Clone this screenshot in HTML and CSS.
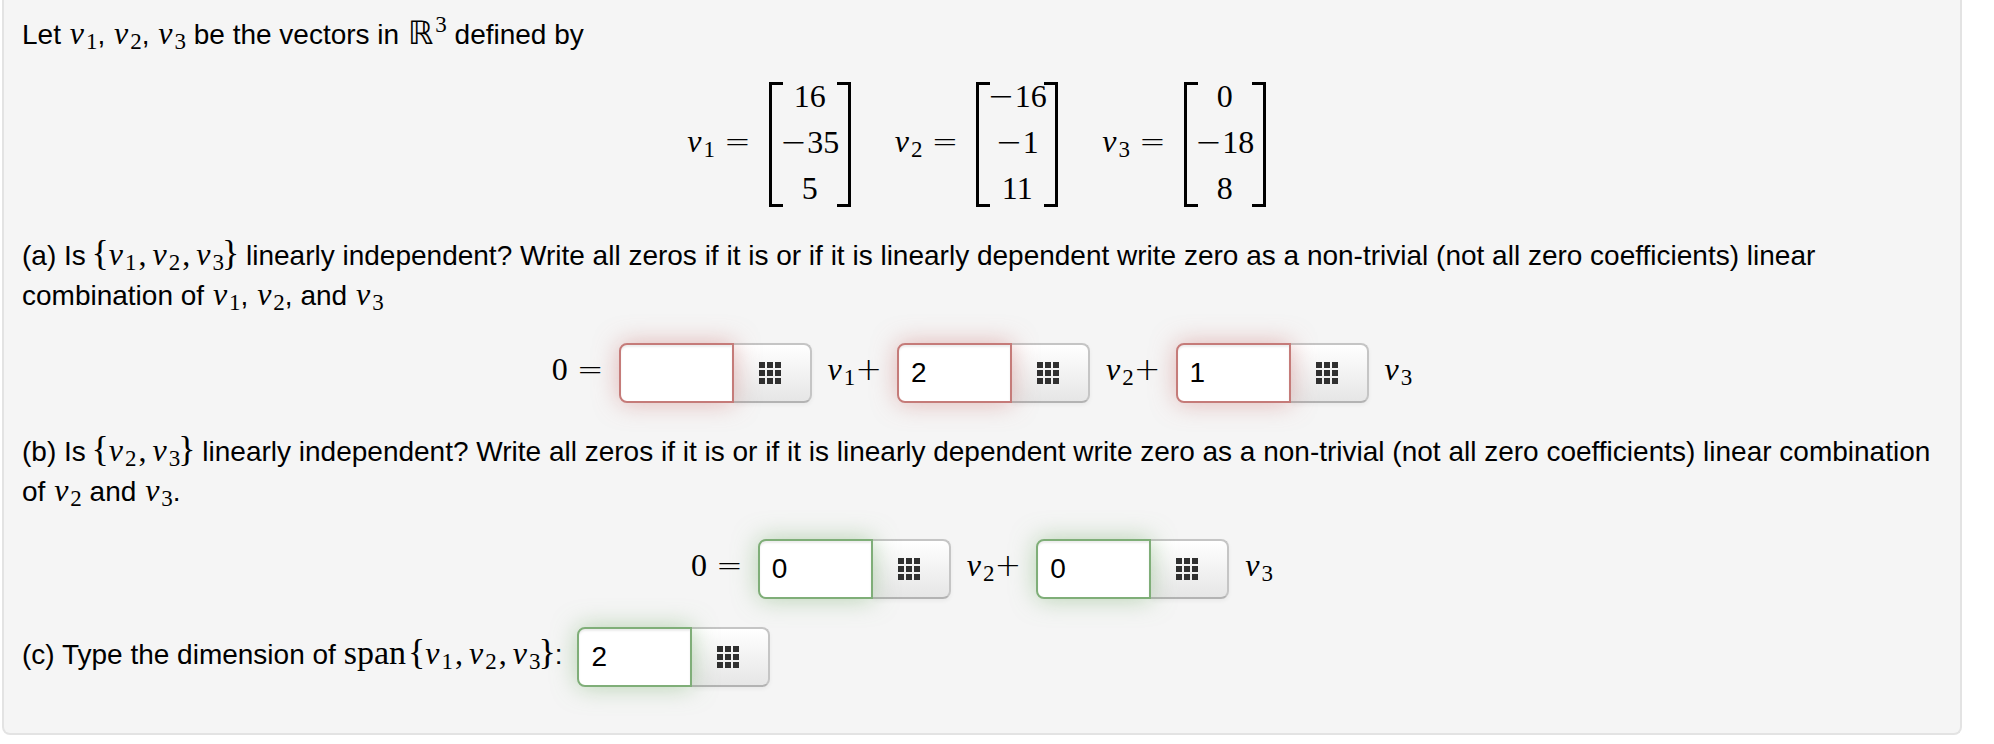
FILE: index.html
```html
<!DOCTYPE html>
<html lang="en">
<head>
    <meta charset="UTF-8" />
    <meta name="viewport" content="width=device-width, initial-scale=1.0"/>
    <title>Linear Independence</title>
    <link rel="stylesheet" href="styles.css">
</head>
<body>
    <svg class="sprite" aria-hidden="true">
        <symbol id="grid" viewBox="0 0 22 22">
            <path d="M0 0h6v6h-6zM8 0h6v6h-6zM16 0h6v6h-6zM0 8h6v6h-6zM8 8h6v6h-6zM16 8h6v6h-6zM0 16h6v6h-6zM8 16h6v6h-6zM16 16h6v6h-6z"/>
        </symbol>
    </svg>
    <main class="problem">
        <p>Let <span class="math"><i>v</i><sub>1</sub></span>, <span class="math"><i>v</i><sub>2</sub></span>, <span class="math"><i>v</i><sub>3</sub></span> be the vectors in <span class="math"><span class="real">ℝ</span><sup>3</sup></span> defined by</p>

        <div class="vectors">
            <div class="vector">
                <span class="term"><span class="math"><i>v</i><sub>1</sub><span class="op rel">=</span></span></span>
                <div class="matrix">
                    <span>16</span>
                    <span><span class="op">−</span>35</span>
                    <span>5</span>
                </div>
            </div>
            <div class="vector">
                <span class="term"><span class="math"><i>v</i><sub>2</sub><span class="op rel">=</span></span></span>
                <div class="matrix">
                    <span><span class="op">−</span>16</span>
                    <span><span class="op">−</span>1</span>
                    <span>11</span>
                </div>
            </div>
            <div class="vector">
                <span class="term"><span class="math"><i>v</i><sub>3</sub><span class="op rel">=</span></span></span>
                <div class="matrix">
                    <span>0</span>
                    <span><span class="op">−</span>18</span>
                    <span>8</span>
                </div>
            </div>
        </div>

        <p>(a) Is <span class="math"><span class="brace">{</span><i>v</i><sub>1</sub><span class="comma">,</span><i>v</i><sub>2</sub><span class="comma">,</span><i>v</i><sub>3</sub><span class="brace">}</span></span> linearly independent? Write all zeros if it is or if it is linearly dependent write zero as a non-trivial (not all zero coefficients) linear combination of <span class="math"><i>v</i><sub>1</sub></span>, <span class="math"><i>v</i><sub>2</sub></span>, and <span class="math"><i>v</i><sub>3</sub></span></p>

        <div class="equation">
            <span class="term"><span class="math">0<span class="op rel">=</span></span></span>
            <div class="answer wrong">
                <input type="text" value="" aria-label="Coefficient of v1, part a">
                <button type="button" aria-label="Equation editor"><svg class="icon"><use href="#grid"/></svg></button>
            </div>
            <span class="term"><span class="math"><i>v</i><sub>1</sub><span class="op">+</span></span></span>
            <div class="answer wrong">
                <input type="text" value="2" aria-label="Coefficient of v2, part a">
                <button type="button" aria-label="Equation editor"><svg class="icon"><use href="#grid"/></svg></button>
            </div>
            <span class="term"><span class="math"><i>v</i><sub>2</sub><span class="op">+</span></span></span>
            <div class="answer wrong">
                <input type="text" value="1" aria-label="Coefficient of v3, part a">
                <button type="button" aria-label="Equation editor"><svg class="icon"><use href="#grid"/></svg></button>
            </div>
            <span class="term"><span class="math"><i>v</i><sub>3</sub></span></span>
        </div>

        <p>(b) Is <span class="math"><span class="brace">{</span><i>v</i><sub>2</sub><span class="comma">,</span><i>v</i><sub>3</sub><span class="brace">}</span></span> linearly independent? Write all zeros if it is or if it is linearly dependent write zero as a non-trivial (not all zero coefficients) linear combination of <span class="math"><i>v</i><sub>2</sub></span> and <span class="math"><i>v</i><sub>3</sub></span>.</p>

        <div class="equation">
            <span class="term"><span class="math">0<span class="op rel">=</span></span></span>
            <div class="answer right">
                <input type="text" value="0" aria-label="Coefficient of v2, part b">
                <button type="button" aria-label="Equation editor"><svg class="icon"><use href="#grid"/></svg></button>
            </div>
            <span class="term"><span class="math"><i>v</i><sub>2</sub><span class="op">+</span></span></span>
            <div class="answer right">
                <input type="text" value="0" aria-label="Coefficient of v3, part b">
                <button type="button" aria-label="Equation editor"><svg class="icon"><use href="#grid"/></svg></button>
            </div>
            <span class="term"><span class="math"><i>v</i><sub>3</sub></span></span>
        </div>

        <div class="equation start">
            <label class="term" for="dimension">(c) Type the dimension of <span class="math"><span class="fn">span</span><span class="brace">{</span><i>v</i><sub>1</sub><span class="comma">,</span><i>v</i><sub>2</sub><span class="comma">,</span><i>v</i><sub>3</sub><span class="brace">}</span></span>:</label>
            <div class="answer right">
                <input type="text" id="dimension" value="2">
                <button type="button" aria-label="Equation editor"><svg class="icon"><use href="#grid"/></svg></button>
            </div>
        </div>
    </main>
</body>
</html>
```
FILE: styles.css
```css
* {
    box-sizing: border-box;
}

body {
    margin: 0;
    background-color: #ffffff;
    color: #000000;
    font-family: "Liberation Sans", Helvetica, Arial, sans-serif;
    font-size: 28px;
    line-height: 40px;
}

p {
    margin: 1px 0 -1px;
}

.sprite {
    display: none;
}

.problem {
    display: flex;
    flex-direction: column;
    gap: 28px;
    margin: 0 32px 0 2px;
    padding: 14px 18px 46px;
    background-color: #f5f5f5;
    border: 2px solid #e3e3e3;
    border-top: none;
    border-radius: 0 0 8px 8px;
}

/* math text */
.math {
    font-family: "Liberation Serif", "Times New Roman", serif;
    font-size: 32px;
    line-height: 0;
    white-space: nowrap;
}

.math i {
    margin: 0 2px 0 1px;
}

.math sub,
.math sup {
    font-size: 23px;
    line-height: 0;
}

.math sub {
    vertical-align: -5px;
}

.math sup {
    vertical-align: 12px;
}

.real {
    margin: 0 2px 0 1px;
    font-family: "DejaVu Sans", sans-serif;
    font-size: 32px;
}

.op {
    font-family: "DejaVu Sans", sans-serif;
    font-size: 32px;
    font-weight: 200;
    line-height: 0;
}

.rel {
    margin-left: 9px;
}

.brace {
    margin: 0 -1px 0 -2px;
    font-size: 36px;
}

.comma {
    margin: 0 5px 0 2px;
}

.fn {
    margin-right: 4px;
    font-size: 34px;
}

/* column vectors */
.vectors {
    display: flex;
    justify-content: center;
    gap: 43px;
    padding-right: 12px;
}

.vector {
    display: flex;
    align-items: center;
    gap: 18px;
}

.matrix {
    position: relative;
    display: grid;
    grid-auto-rows: 46px;
    width: 82px;
    height: 125px;
    align-content: center;
    justify-items: center;
    font-family: "Liberation Serif", "Times New Roman", serif;
    font-size: 32px;
    line-height: 40px;
    white-space: nowrap;
}

.matrix::before,
.matrix::after {
    content: "";
    position: absolute;
    top: 0;
    bottom: 0;
    width: 11px;
    border: 3px solid #000000;
}

.matrix::before {
    left: 0;
    border-right: none;
}

.matrix::after {
    right: 0;
    border-left: none;
}

/* answer rows */
.equation {
    display: flex;
    align-items: center;
    justify-content: center;
    gap: 15px;
}

.equation.start {
    justify-content: flex-start;
}

.term {
    padding-bottom: 4px;
}

.answer {
    display: flex;
    height: 60px;
}

.answer input {
    position: relative;
    z-index: 1;
    width: 115px;
    padding: 0 12px;
    border: 2px solid #cccccc;
    border-radius: 8px 0 0 8px;
    background-color: #ffffff;
    color: #000000;
    font-family: inherit;
    font-size: 28px;
}

.answer button {
    display: flex;
    align-items: center;
    justify-content: center;
    width: 78px;
    padding: 0 4px 0 0;
    border: 2px solid #c5c5c5;
    border-left: none;
    border-bottom-color: #b3b3b3;
    border-radius: 0 8px 8px 0;
    background: linear-gradient(#ffffff, #e6e6e6);
    box-shadow: 0 2px 4px rgba(0, 0, 0, 0.05);
}

.wrong input {
    border-color: #c57b79;
    box-shadow: inset 0 2px 2px rgba(0, 0, 0, 0.075), 0 0 24px rgba(205, 120, 118, 0.5);
}

.right input {
    border-color: #7fae78;
    box-shadow: inset 0 2px 2px rgba(0, 0, 0, 0.075), 0 0 24px rgba(120, 175, 110, 0.5);
}

.icon {
    width: 22px;
    height: 22px;
    fill: #303030;
}
```
